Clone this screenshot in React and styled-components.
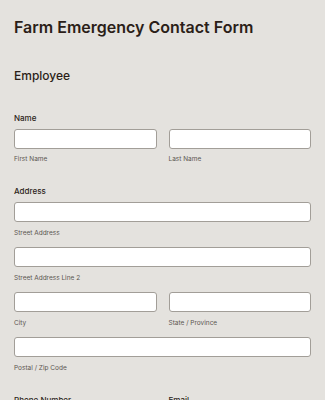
import React from 'react';
import styled, { createGlobalStyle } from 'styled-components';

const GlobalStyle = createGlobalStyle`
  html, body {
    margin: 0;
    padding: 0;
    background: #e4e2de;
  }
  * {
    box-sizing: border-box;
  }
`;

const Page = styled.main`
  min-height: 400px;
  padding: 16.5px 14px 0;
  background: #e4e2de;
  font-family: Inter, "Noto Sans", sans-serif;
  color: #2b1e18;
`;

const Title = styled.h1`
  margin: 0;
  font-size: 16px;
  line-height: 20px;
  font-weight: 600;
`;

const Section = styled.h2`
  margin: 31.8px 0 0;
  font-size: 12px;
  line-height: 16px;
  font-weight: 500;
`;

const Group = styled.div`
  margin-top: ${(p) => p.$top}px;
  display: flex;
  flex-direction: column;
`;

const GroupLabel = styled.div`
  font-size: 8px;
  line-height: 10px;
  font-weight: 500;
  margin-bottom: 6.2px;
`;

const Row = styled.div`
  display: grid;
  grid-template-columns: ${(p) => (p.$cols === 2 ? '1fr 1fr' : '1fr')};
  column-gap: 12px;
  & + & {
    margin-top: 10.5px;
  }
`;

const Field = styled.div`
  display: flex;
  flex-direction: column;
`;

const Input = styled.div`
  height: 20px;
  background: #fff;
  border: 1px solid #a29e98;
  border-radius: 3px;
`;

const SubLabel = styled.span`
  margin-top: 6.5px;
  font-size: 6.5px;
  line-height: 8px;
  color: #5c5651;
`;

export default function App() {
  return (
    <Page>
      <GlobalStyle />
      <Title>Farm Emergency Contact Form</Title>
      <Section>Employee</Section>

      <Group $top={28.5}>
        <GroupLabel>Name</GroupLabel>
        <Row $cols={2}>
          <Field>
            <Input />
            <SubLabel>First Name</SubLabel>
          </Field>
          <Field>
            <Input />
            <SubLabel>Last Name</SubLabel>
          </Field>
        </Row>
      </Group>

      <Group $top={22.5}>
        <GroupLabel>Address</GroupLabel>
        <Row>
          <Field>
            <Input />
            <SubLabel>Street Address</SubLabel>
          </Field>
        </Row>
        <Row>
          <Field>
            <Input />
            <SubLabel>Street Address Line 2</SubLabel>
          </Field>
        </Row>
        <Row $cols={2}>
          <Field>
            <Input />
            <SubLabel>City</SubLabel>
          </Field>
          <Field>
            <Input />
            <SubLabel>State / Province</SubLabel>
          </Field>
        </Row>
        <Row>
          <Field>
            <Input />
            <SubLabel>Postal / Zip Code</SubLabel>
          </Field>
        </Row>
      </Group>

      <Group $top={23.5}>
        <Row $cols={2}>
          <GroupLabel>Phone Number</GroupLabel>
          <GroupLabel>Email</GroupLabel>
        </Row>
      </Group>
    </Page>
  );
}
